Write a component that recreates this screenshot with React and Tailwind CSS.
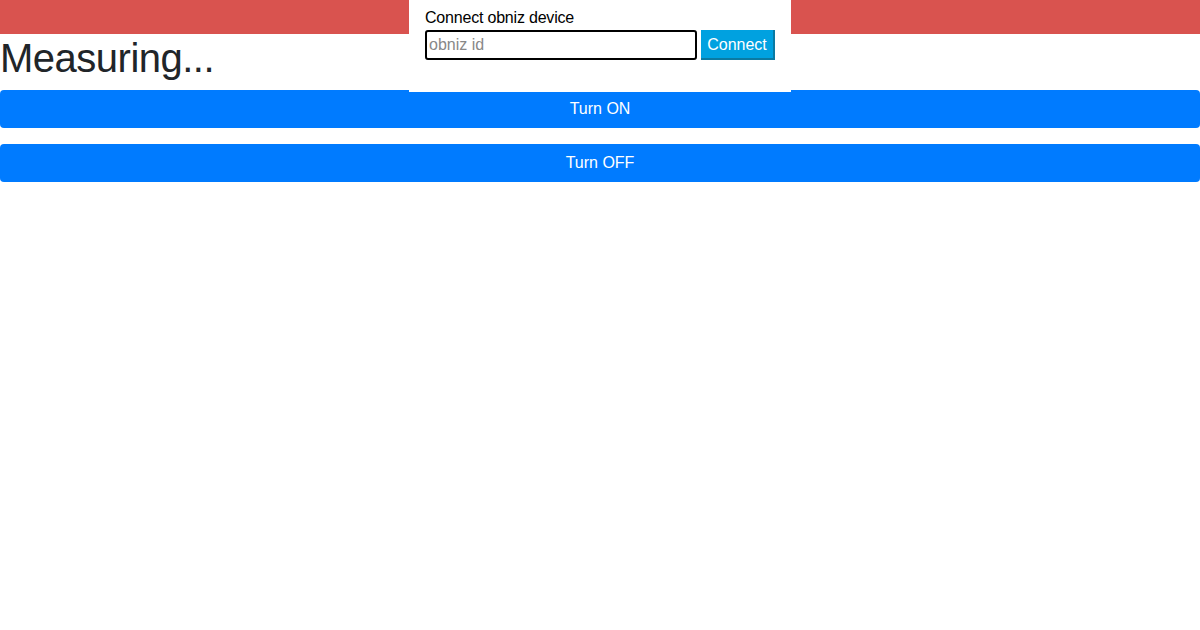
import React from 'react'

export default function App() {
  return (
    <div className="relative min-h-[630px] bg-white text-[#212529]" style={{ fontFamily: '"Liberation Sans", Arial, sans-serif' }}>
      {/* Header bar */}
      <div className="h-[34px] bg-[#d9534f]" />

      <h1 className="mb-2 text-[40px] font-normal leading-[48px] tracking-[-0.5px]">Measuring...</h1>

      <button className="mb-4 block h-[38px] w-full rounded-[4px] bg-[#007bff] text-[16px] text-white">Turn ON</button>
      <button className="block h-[38px] w-full rounded-[4px] bg-[#007bff] text-[16px] text-white">Turn OFF</button>

      {/* obniz connect overlay */}
      <div className="absolute left-[409px] top-0 w-[382px] bg-white px-4 pb-8 pt-2 text-black">
        <div className="text-[16px] leading-[20px] tracking-[-0.2px]">Connect obniz device</div>
        <div className="mt-[2px] flex gap-1">
          <input
            className="h-[30px] w-[272px] rounded-[3px] border-2 border-black px-[2px] text-[16px] outline-none placeholder:text-[#888]"
            placeholder="obniz id"
          />
          <button className="h-[30px] w-[74px] border-b-2 border-r-2 border-[#0a7aa3] bg-[#00a1e0] pt-[1px] text-[16px] text-white">Connect</button>
        </div>
      </div>
    </div>
  )
}
